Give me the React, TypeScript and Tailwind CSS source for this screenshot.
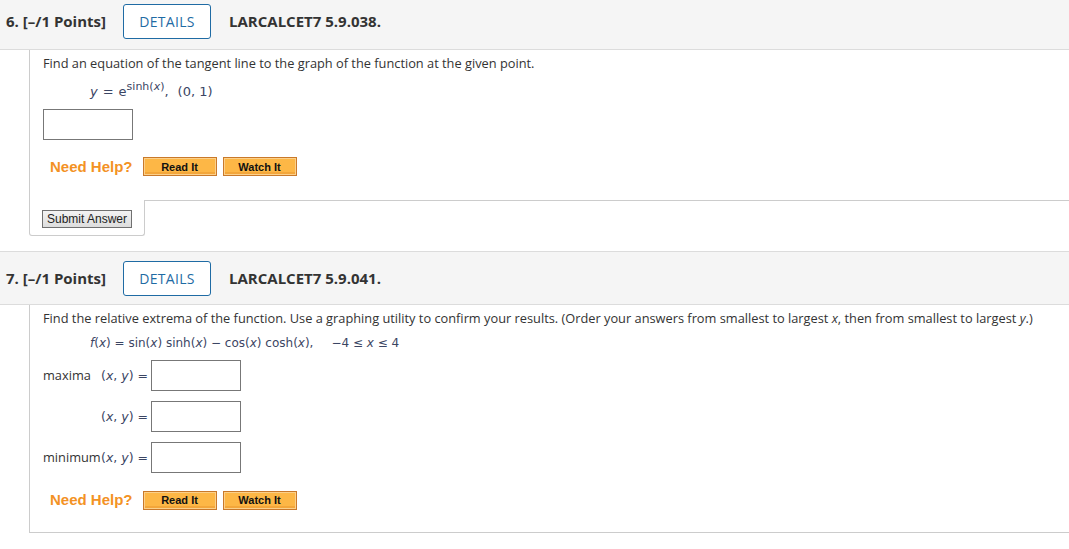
import React from "react";

const M = ({ children }: { children: React.ReactNode }) => (
  <span className="italic">{children}</span>
);

const MATHF = "font-['DejaVu_Sans',Verdana,sans-serif] text-[#3b4563]";

function Header({ num, code, first }: { num: string; code: string; first?: boolean }) {
  return (
    <div
      className={`flex items-center bg-[#f5f5f5] border-b border-[#dcdcdc] ${
        first ? "h-[50px] pb-[6px]" : "h-[54px] border-t pt-[1px]"
      }`}
    >
      <div className="pl-[6px] w-[123px] font-bold text-[15px] text-[#333] whitespace-pre">
        {num}. [–/1 Points]
      </div>
      <div className="h-[35px] w-[88px] flex items-center justify-center bg-white border border-[#1f6ba4] rounded-[3px] text-[#1f6ba4] text-[14px] tracking-[0.3px]">
        DETAILS
      </div>
      <div className="ml-[18px] font-bold text-[15px] text-[#333]">{code}</div>
    </div>
  );
}

function HelpRow() {
  return (
    <div className="flex items-center ml-[7px] gap-[6px]">
      <span className="font-['Liberation_Sans',Arial,sans-serif] font-bold text-[15px] text-[#f39224] mr-[4px]">
        Need Help?
      </span>
      <HelpBtn label="Read It" />
      <HelpBtn label="Watch It" />
    </div>
  );
}

function HelpBtn({ label }: { label: string }) {
  return (
    <div className="w-[74px] h-[19px] flex items-center justify-center border border-[#c9792a] bg-[#fdb746] shadow-[inset_0_0_0_1px_#fcd08a,inset_0_-2px_0_1px_#f3a63a] font-['Liberation_Sans',Arial,sans-serif] font-bold text-[11px] text-[#111]">
      {label}
    </div>
  );
}

function Input() {
  return <div className="w-[90px] h-[31px] border border-[#777] bg-white" />;
}

function XY() {
  return (
    <span className={`${MATHF} text-[12.5px]`}>
      (<M>x</M>, <M>y</M>) =
    </span>
  );
}

export default function App() {
  return (
    <div className="w-[1069px] h-[549px] bg-white overflow-hidden font-['Open_Sans',sans-serif] text-[12.8px] text-[#333]">
      <Header num="6" code="LARCALCET7 5.9.038." first />
      <div className="ml-[29px] border-l border-b border-[#cccccc] pl-[13px] pt-[4px] h-[151px]">
        <div>Find an equation of the tangent line to the graph of the function at the given point.</div>
        <div className={`ml-[47px] mt-[9px] flex items-baseline text-[13px] ${MATHF}`}>
          <M>y</M>
          <span className="mx-[5px]">=</span>
          <span>e</span>
          <span className="text-[11px] relative -top-[6px]">
            sinh(<M>x</M>)
          </span>
          <span>,</span>
          <span className="ml-[9px]">(0, 1)</span>
        </div>
        <div className="mt-[7px]">
          <Input />
        </div>
        <div className="mt-[16px]">
          <HelpRow />
        </div>
      </div>
      <div className="ml-[29px] w-[116px] h-[36px] -mt-px relative bg-white border-l border-r border-b border-[#cccccc] rounded-b-[3px] pl-[12px] pt-[10px]">
        <div className="w-[90px] h-[18px] flex items-center justify-center border border-[#707070] bg-gradient-to-b from-[#f3f3f3] to-[#dddddd] font-['Liberation_Sans',Arial,sans-serif] text-[12px] text-[#222]">
          Submit Answer
        </div>
      </div>
      <div className="h-[15px]" />
      <Header num="7" code="LARCALCET7 5.9.041." />
      <div className="ml-[29px] border-l border-b border-[#cccccc] pl-[13px] pt-[4px] h-[228px]">
        <div>
          Find the relative extrema of the function. Use a graphing utility to confirm your results. (Order your answers from smallest to largest <M>x</M>, then from smallest to largest <M>y</M>.)
        </div>
        <div className={`ml-[47px] mt-[6px] text-[12px] flex items-baseline ${MATHF}`}>
          <span>
            <M>f</M>(<M>x</M>) = sin(<M>x</M>) sinh(<M>x</M>) − cos(<M>x</M>) cosh(<M>x</M>),
          </span>
          <span className="ml-[18px]">
            −4 ≤ <M>x</M> ≤ 4
          </span>
        </div>
        <div className="mt-[8px] grid grid-cols-[58px_auto_auto] justify-start items-center gap-y-[10px]">
          <span>maxima</span>
          <span className="justify-self-end pr-[3px]"><XY /></span>
          <Input />
          <span />
          <span className="justify-self-end pr-[3px]"><XY /></span>
          <Input />
          <span>minimum</span>
          <span className="justify-self-end pr-[3px]"><XY /></span>
          <Input />
        </div>
        <div className="mt-[16px]">
          <HelpRow />
        </div>
      </div>
    </div>
  );
}
